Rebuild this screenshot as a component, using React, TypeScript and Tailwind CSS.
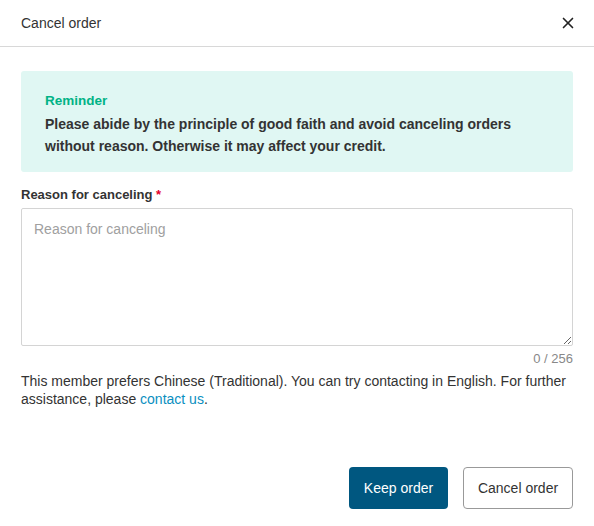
import { X } from "lucide-react";

export default function App() {
  return (
    <div className="w-[594px] h-[526px] bg-white font-['Liberation_Sans',Arial,sans-serif] text-[#333]">
      <div className="h-[47px] flex items-center justify-between pl-[21px] pr-[17px] border-b border-[#d8d8d8]">
        <span className="text-[14px] text-[#333]">Cancel order</span>
        <X size={18} strokeWidth={2.2} className="text-[#222]" />
      </div>

      <div className="px-[21px] pt-[24px]">
        <div className="bg-[#e0f7f3] rounded-[3px] pl-[24px] pr-4 pt-[21px] pb-[15px]">
          <div className="text-[13.5px] font-bold text-[#00b386] leading-[18px]">Reminder</div>
          <p className="mt-[3px] text-[14px] font-bold text-[#333] leading-[22px]">
            Please abide by the principle of good faith and avoid canceling orders
            <br />
            without reason. Otherwise it may affect your credit.
          </p>
        </div>

        <label className="block mt-[15px] text-[13px] font-bold text-[#333] leading-[16px]">
          Reason for canceling <span className="text-[#e4002b]">*</span>
        </label>
        <textarea
          placeholder="Reason for canceling"
          className="mt-[5px] block w-full h-[138px] border border-[#d4d4d4] rounded-[2px] px-[12px] py-[10px] text-[14px] placeholder:text-[#a0a0a0] outline-none"
        />
        <div className="mt-[5px] text-right text-[13px] text-[#888] leading-[16px]">0 / 256</div>
        <p className="mt-[5px] text-[14px] leading-[18px] text-[#333]">
          This member prefers Chinese (Traditional). You can try contacting in English. For further assistance, please{" "}
          <span className="text-[#0a8fbf]">contact us</span>.
        </p>

        <div className="mt-[59px] flex justify-end gap-[15px]">
          <button className="h-[42px] w-[99px] rounded-[4px] bg-[#005780] text-white text-[14px]">Keep order</button>
          <button className="h-[42px] w-[110px] rounded-[4px] border border-[#999] bg-white text-[#333] text-[14px]">Cancel order</button>
        </div>
      </div>
    </div>
  );
}
